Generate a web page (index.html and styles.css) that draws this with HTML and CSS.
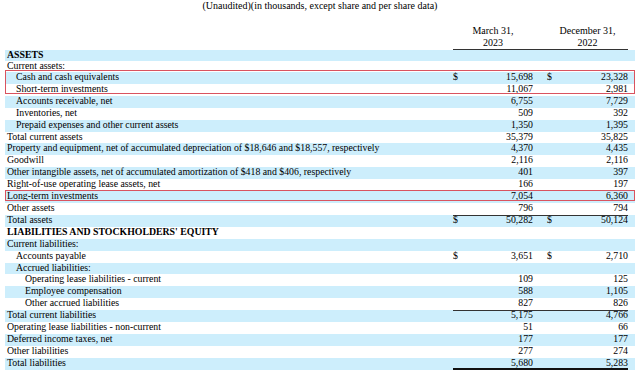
FILE: index.html
```html
<!DOCTYPE html>
<html lang="en">
<head>
    <meta charset="UTF-8">
    <title>Balance Sheet</title>
    <link rel="stylesheet" href="styles.css">
</head>
<body>
    <div class="sheet">
        <div class="caption">(Unaudited)(in thousands, except share and per share data)</div>
        <table class="bs">
            <colgroup>
                <col class="c-label">
                <col class="c-cur">
                <col class="c-num">
                <col class="c-gap">
                <col class="c-cur">
                <col class="c-num2">
                <col class="c-end">
            </colgroup>
            <tr class="head">
                <td></td>
                <td class="period" colspan="2">March 31,<br>2023</td>
                <td class="line"></td>
                <td class="period" colspan="2">December 31,<br>2022</td>
                <td></td>
            </tr>
            <tr class="alt tight"><td class="l0 b">ASSETS</td><td></td><td></td><td></td><td></td><td></td><td></td></tr>
            <tr class="tight"><td class="l0">Current assets:</td><td></td><td></td><td></td><td></td><td></td><td></td></tr>
            <tr class="alt"><td class="l1">Cash and cash equivalents</td><td class="cur">$</td><td class="num">15,698</td><td></td><td class="cur">$</td><td class="num">23,328</td><td></td></tr>
            <tr><td class="l1">Short-term investments</td><td></td><td class="num">11,067</td><td></td><td></td><td class="num">2,981</td><td></td></tr>
            <tr class="alt"><td class="l1">Accounts receivable, net</td><td></td><td class="num">6,755</td><td></td><td></td><td class="num">7,729</td><td></td></tr>
            <tr><td class="l1">Inventories, net</td><td></td><td class="num">509</td><td></td><td></td><td class="num">392</td><td></td></tr>
            <tr class="alt"><td class="l1">Prepaid expenses and other current assets</td><td></td><td class="num">1,350</td><td></td><td></td><td class="num">1,395</td><td></td></tr>
            <tr><td class="l0">Total current assets</td><td></td><td class="num">35,379</td><td></td><td></td><td class="num">35,825</td><td></td></tr>
            <tr class="alt"><td class="l0">Property and equipment, net of accumulated depreciation of $18,646 and $18,557, respectively</td><td></td><td class="num">4,370</td><td></td><td></td><td class="num">4,435</td><td></td></tr>
            <tr><td class="l0">Goodwill</td><td></td><td class="num">2,116</td><td></td><td></td><td class="num">2,116</td><td></td></tr>
            <tr class="alt"><td class="l0">Other intangible assets, net of accumulated amortization of $418 and $406, respectively</td><td></td><td class="num">401</td><td></td><td></td><td class="num">397</td><td></td></tr>
            <tr><td class="l0">Right-of-use operating lease assets, net</td><td></td><td class="num">166</td><td></td><td></td><td class="num">197</td><td></td></tr>
            <tr class="alt"><td class="l0">Long-term investments</td><td></td><td class="num">7,054</td><td></td><td></td><td class="num">6,360</td><td></td></tr>
            <tr><td class="l0">Other assets</td><td></td><td class="num">796</td><td></td><td></td><td class="num">794</td><td></td></tr>
            <tr class="alt sum"><td class="l0">Total assets</td><td class="cur">$</td><td class="num">50,282</td><td></td><td class="cur">$</td><td class="num">50,124</td><td></td></tr>
            <tr><td class="l0 b">LIABILITIES AND STOCKHOLDERS' EQUITY</td><td></td><td></td><td></td><td></td><td></td><td></td></tr>
            <tr class="alt"><td class="l0">Current liabilities:</td><td></td><td></td><td></td><td></td><td></td><td></td></tr>
            <tr><td class="l1">Accounts payable</td><td class="cur">$</td><td class="num">3,651</td><td></td><td class="cur">$</td><td class="num">2,710</td><td></td></tr>
            <tr class="alt"><td class="l1">Accrued liabilities:</td><td></td><td></td><td></td><td></td><td></td><td></td></tr>
            <tr><td class="l2">Operating lease liabilities - current</td><td></td><td class="num">109</td><td></td><td></td><td class="num">125</td><td></td></tr>
            <tr class="alt"><td class="l2">Employee compensation</td><td></td><td class="num">588</td><td></td><td></td><td class="num">1,105</td><td></td></tr>
            <tr><td class="l2">Other accrued liabilities</td><td></td><td class="num">827</td><td></td><td></td><td class="num">826</td><td></td></tr>
            <tr class="alt sum"><td class="l0">Total current liabilities</td><td></td><td class="num">5,175</td><td></td><td></td><td class="num">4,766</td><td></td></tr>
            <tr><td class="l0">Operating lease liabilities - non-current</td><td></td><td class="num">51</td><td></td><td></td><td class="num">66</td><td></td></tr>
            <tr class="alt"><td class="l0">Deferred income taxes, net</td><td></td><td class="num">177</td><td></td><td></td><td class="num">177</td><td></td></tr>
            <tr><td class="l0">Other liabilities</td><td></td><td class="num">277</td><td></td><td></td><td class="num">274</td><td></td></tr>
            <tr class="alt total"><td class="l0">Total liabilities</td><td></td><td class="num">5,680</td><td></td><td></td><td class="num">5,283</td><td></td></tr>
        </table>
        <div class="mark mark-cash"></div>
        <div class="mark mark-lti"></div>
    </div>
</body>
</html>
```

FILE: styles.css
```css
html, body {
    margin: 0;
    padding: 0;
    background: #fff;
}
.sheet {
    position: relative;
    width: 640px;
    height: 370px;
    overflow: hidden;
    font-family: "Liberation Serif", "Times New Roman", serif;
    font-size: 10px;
    color: #000;
}
.caption {
    height: 12px;
    line-height: 11px;
    text-align: center;
}
.bs {
    margin-left: 5px;
    width: 630px;
    table-layout: fixed;
    border-collapse: collapse;
    border-spacing: 0;
    font-size: 9.8px;
}
.c-label { width: 448px; }
.c-cur { width: 12px; }
.c-num { width: 68px; }
.c-gap { width: 14px; }
.c-num2 { width: 69px; }
.c-end { width: 7px; }
.bs td {
    padding: 0;
    height: 11.92px;
    line-height: 9.6px;
    white-space: nowrap;
    vertical-align: top;
}
.bs tr.tight td {
    height: 11px;
}
.bs tr.alt td {
    background: #cdeefc;
}
.bs tr.head td {
    height: 36px;
    font-size: 10px;
    line-height: 11.5px;
    vertical-align: bottom;
    padding-bottom: 2px;
}
.bs tr.head td.period {
    text-align: center;
    box-shadow: inset 0 -1px 0 #333;
}
.bs tr.head td.line {
    box-shadow: inset 0 -1px 0 #333;
}
.l0 { padding-left: 2px !important; }
.l1 { padding-left: 11px !important; }
.l2 { padding-left: 20px !important; }
.b { font-weight: bold; }
.cur { text-align: left; }
.num { text-align: right; }
.bs tr.sum td:nth-child(n+2):nth-child(-n+6) {
    box-shadow: inset 0 1px 0 #333;
}
.bs tr.total td:nth-child(n+2):nth-child(-n+6) {
    box-shadow: inset 0 -2px 0 #111;
}
.mark {
    position: absolute;
    left: 5px;
    width: 628px;
    border: 1px solid #d9535f;
}
.mark-cash {
    top: 70px;
    height: 22px;
}
.mark-lti {
    top: 190px;
    height: 9px;
}
```
